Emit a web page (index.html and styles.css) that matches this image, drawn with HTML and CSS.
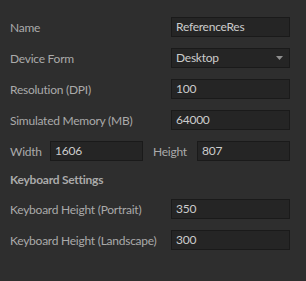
FILE: index.html
```
<!DOCTYPE html>
<html lang="en">

<head>
    <meta charset="UTF-8">
    <title>Device Settings</title>
    <link rel="stylesheet" href="styles.css">
</head>

<body>
    <div class="panel">
        <div class="row">
            <label class="label">Name</label>
            <div class="field">ReferenceRes</div>
        </div>
        <div class="row">
            <label class="label">Device Form</label>
            <div class="field select">
                <span>Desktop</span>
                <svg class="arrow" width="7" height="4" viewBox="0 0 7 4">
                    <path d="M0 0 H7 L3.5 4 Z" fill="#8f8f8f" />
                </svg>
            </div>
        </div>
        <div class="row">
            <label class="label">Resolution (DPI)</label>
            <div class="field">100</div>
        </div>
        <div class="row">
            <label class="label">Simulated Memory (MB)</label>
            <div class="field">64000</div>
        </div>
        <div class="row">
            <label class="label small">Width</label>
            <div class="field half">1606</div>
            <label class="label small second">Height</label>
            <div class="field half">807</div>
        </div>
        <h3 class="section">Keyboard Settings</h3>
        <div class="row">
            <label class="label">Keyboard Height (Portrait)</label>
            <div class="field">350</div>
        </div>
        <div class="row">
            <label class="label">Keyboard Height (Landscape)</label>
            <div class="field">300</div>
        </div>
    </div>
</body>

</html>
```

FILE: styles.css
```
body {
    margin: 0;
    background-color: #2e2e2e;
    font-family: "Lato", "Open Sans", sans-serif;
    font-size: 12px;
    letter-spacing: -0.25px;
}

.panel {
    padding: 17px 16px 0 10px;
}

.row {
    display: flex;
    align-items: center;
    height: 20px;
    margin-bottom: 11px;
}

.label {
    flex: 1;
    color: #aaaaaa;
    white-space: nowrap;
}

.label.small {
    flex: none;
    width: 40px;
}

.label.second {
    width: 44px;
    margin-left: 10px;
}

.field {
    width: 119px;
    height: 20px;
    box-sizing: border-box;
    border: 1px solid #1a1a1a;
    background-color: #252525;
    color: #cccccc;
    padding: 0 4px;
    line-height: 18px;
    display: flex;
    align-items: center;
}

.field.half {
    width: 93px;
}

.select {
    justify-content: space-between;
    padding-right: 6px;
}

.arrow {
    display: block;
}

.section {
    margin: -2px 0 9px;
    height: 20px;
    line-height: 20px;
    font-size: 12px;
    font-weight: bold;
    color: #aaaaaa;
}
```
